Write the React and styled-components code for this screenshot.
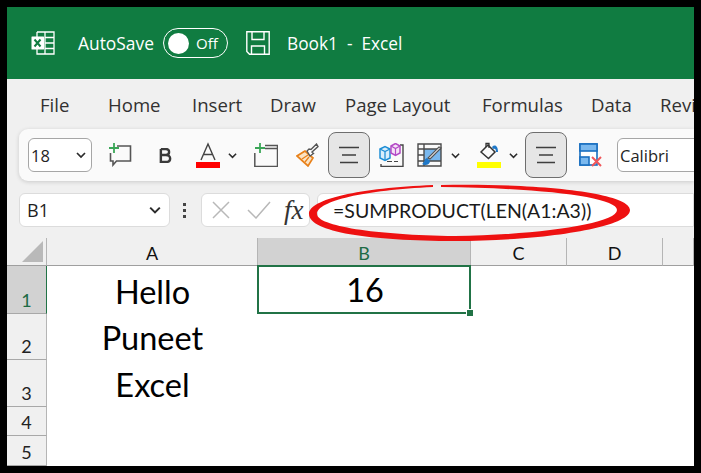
import React from "react";
import styled, { createGlobalStyle } from "styled-components";

const Global = createGlobalStyle`
  html, body { margin: 0; padding: 0; background: #000; }
  body { width: 701px; height: 473px; overflow: hidden; }
`;

const UI = `"Open Sans", "Noto Sans", sans-serif`;
const CELL = `Lato, "Open Sans", sans-serif`;

const Frame = styled.div`
  position: relative;
  box-sizing: border-box;
  width: 701px;
  height: 473px;
  padding: 7px 7px 7px 7px;
  background: #000;
  overflow: hidden;
`;
const Window = styled.div`
  display: flex;
  flex-direction: column;
  height: 459px;
  background: #f0f0f0;
  overflow: hidden;
`;
const TitleBar = styled.header`
  display: flex;
  align-items: center;
  flex: none;
  height: 72px;
  padding-left: 24px;
  background: #107c41;
  color: #fff;
  font: 400 17.4px ${UI};
  white-space: nowrap;
`;
const AutoSaveLabel = styled.span`
  margin-left: 23px;
`;
const Toggle = styled.div`
  display: flex;
  align-items: center;
  box-sizing: border-box;
  width: 65px;
  height: 30px;
  margin-left: 9px;
  padding-left: 4px;
  border: 1px solid #fff;
  border-radius: 15px;
  font-size: 15px;
`;
const Knob = styled.span`
  width: 21px;
  height: 21px;
  border-radius: 50%;
  background: #fff;
`;
const ToggleText = styled.span`
  margin-left: 7px;
`;
const SaveSlot = styled.span`
  display: block;
  margin-left: 18px;
`;
const DocTitle = styled.span`
  margin-left: 17px;
  font-size: 17.3px;
  white-space: pre;
`;

const Menu = styled.nav`
  display: flex;
  align-items: center;
  flex: none;
  height: 50px;
  color: #323130;
  font: 400 18.6px ${UI};
  white-space: nowrap;
  overflow: hidden;
`;
const MenuItem = styled.span`
  flex: none;
  width: ${(p) => p.$w}px;
  margin-left: ${(p) => p.$ml || 0}px;
`;

const Toolbar = styled.div`
  display: flex;
  align-items: center;
  flex: none;
  height: 52px;
  margin-left: 12px;
  padding-left: 9px;
  background: #fafafa;
  border-radius: 9px 0 0 9px;
  box-shadow: 0 1px 4px rgba(0, 0, 0, 0.16);
  overflow: hidden;
`;
const Select = styled.div`
  display: flex;
  align-items: center;
  justify-content: space-between;
  box-sizing: border-box;
  flex: none;
  width: ${(p) => p.$w}px;
  height: 34px;
  margin-left: ${(p) => p.$ml || 0}px;
  padding: 0 5px 0 2px;
  background: #fff;
  border: 1px solid #a6a6a6;
  border-radius: 6px;
  color: #242424;
  font: 400 16.5px ${UI};
`;
const Tool = styled.div`
  display: flex;
  align-items: center;
  justify-content: center;
  flex: none;
  width: ${(p) => p.$w}px;
  margin-left: ${(p) => p.$ml || 0}px;
`;
const ActiveTool = styled.div`
  display: flex;
  align-items: center;
  justify-content: center;
  box-sizing: border-box;
  flex: none;
  width: 42px;
  height: 46px;
  margin-left: ${(p) => p.$ml || 0}px;
  background: #e6e6e6;
  border: 1px solid #6e6e6e;
  border-radius: 8px;
`;

const FormulaRow = styled.div`
  display: flex;
  align-items: center;
  flex: none;
  height: 34px;
  margin-top: 12px;
  margin-left: 12px;
`;
const FieldBox = styled.div`
  display: flex;
  align-items: center;
  box-sizing: border-box;
  flex: ${(p) => (p.$grow ? "1" : "none")};
  width: ${(p) => (p.$w ? `${p.$w}px` : "auto")};
  height: 34px;
  margin-left: ${(p) => p.$ml || 0}px;
  background: #fff;
  border: 1px solid #dcdcdc;
  border-radius: ${(p) => (p.$grow ? "6px 0 0 6px" : "6px")};
  color: #1f1f1f;
  font: 400 18px ${UI};
`;
const NameText = styled.span`
  flex: 1;
  padding-left: 7px;
`;
const NameChevron = styled.span`
  display: flex;
  margin-right: 8px;
`;
const Dots = styled.div`
  display: flex;
  flex-direction: column;
  gap: 3px;
  margin-left: 13px;
`;
const Dot = styled.span`
  width: 3px;
  height: 3px;
  background: #444;
`;
const FxText = styled.span`
  margin-left: 13px;
  color: #333;
  font: italic 400 27px "Liberation Serif", serif;
`;
const FormulaText = styled.span`
  padding-left: 15px;
  color: #1a1a1a;
  font: 400 19.5px ${CELL};
  white-space: nowrap;
`;

const Sheet = styled.div`
  display: grid;
  flex: none;
  grid-template-columns: 40px 211px 213px 96px 96px 31px;
  grid-template-rows: 28px 48px 46px 47px 29px 30px;
  margin-top: 11px;
  background: #fff;
  font-family: ${CELL};
`;
const Corner = styled.div`
  position: relative;
  background: #f0f0f0;
  border-right: 1px solid #b5b5b5;
  border-bottom: 1px solid #9f9f9f;
  box-sizing: border-box;
`;
const Triangle = styled.span`
  position: absolute;
  right: 3px;
  bottom: 3px;
  width: 21px;
  height: 21px;
  background: #b9b9b9;
  clip-path: polygon(100% 0, 100% 100%, 0 100%);
`;
const ColHead = styled.div`
  display: flex;
  align-items: center;
  justify-content: center;
  box-sizing: border-box;
  padding-top: 2px;
  background: ${(p) => (p.$on ? "#d2d2d2" : "#f0f0f0")};
  border-right: 1px solid #b5b5b5;
  border-bottom: 1px solid #9f9f9f;
  color: ${(p) => (p.$on ? "#1e6b45" : "#111")};
  font-size: 18px;
`;
const RowHead = styled.div`
  display: flex;
  align-items: flex-end;
  justify-content: center;
  box-sizing: border-box;
  padding-bottom: 2px;
  background: ${(p) => (p.$on ? "#d2d2d2" : "#f0f0f0")};
  border-right: 1px solid ${(p) => (p.$on ? "#217346" : "#b5b5b5")};
  border-bottom: 1px solid #a8a8a8;
  color: ${(p) => (p.$on ? "#1e6b45" : "#222")};
  font-size: 18px;
  line-height: 22px;
`;
const Cell = styled.div`
  display: flex;
  align-items: flex-end;
  justify-content: center;
  box-sizing: border-box;
  color: #000;
  font-size: 32.5px;
  line-height: 44px;
`;
const Selected = styled(Cell)`
  position: relative;
  z-index: 1;
  margin: -1px 0 0 -1px;
  padding-left: 2px;
  border: 2px solid #217346;
  border-bottom-width: 2px;
`;
const Handle = styled.span`
  position: absolute;
  right: -4px;
  bottom: -4px;
  width: 6px;
  height: 6px;
  background: #217346;
  outline: 1px solid #fff;
`;
const Oval = styled.svg`
  position: absolute;
  left: 0;
  top: 0;
  z-index: 3;
  pointer-events: none;
`;

const Chevron = ({ size = 10 }) => (
  <svg width={size} height={size} viewBox="0 0 10 10" fill="none">
    <path d="M1 3l4 4 4-4" stroke="#2b2b2b" strokeWidth="1.7" />
  </svg>
);
const Lines = () => (
  <svg width="24" height="24" viewBox="0 0 24 24" stroke="#3f3f3f" strokeWidth="1.6">
    <path d="M2 4.5h20M5 12h14M3 19.5h18" />
  </svg>
);

const ExcelLogo = () => (
  <svg width="24" height="24" viewBox="0 0 24 24">
    <path d="M6 1h17v22H6V18" fill="none" stroke="#fff" strokeWidth="1.3" />
    <path d="M14 1v22M14 6.5h9M14 12h9M14 17.5h9M6 1v5" stroke="#fff" strokeWidth="1.3" />
    <rect x="0.5" y="5.5" width="12.5" height="13" rx="0.5" fill="#fff" />
    <path d="M3.5 8.5l6 7M9.5 8.5l-6 7" stroke="#107c41" strokeWidth="2" />
  </svg>
);
const FloppyIcon = () => (
  <svg width="24" height="24" viewBox="0 0 24 24" fill="none" stroke="#fff" strokeWidth="1.4" style={{ display: "block" }}>
    <path d="M.8.8h22.4v22.4H3.5L.8 20.5z" />
    <path d="M6 1v7.5h12V1M5.5 23v-8h13v8" />
  </svg>
);
const CommentIcon = () => (
  <svg width="24" height="24" viewBox="0 0 24 24" fill="none">
    <path d="M9 3h13.5v15H8.5L5 22v-4H2.5V10" stroke="#555" strokeWidth="1.6" />
    <path d="M6 0v10M1 5h10" stroke="#3aa657" strokeWidth="1.8" />
  </svg>
);
const ColorA = () => (
  <svg width="24" height="26" viewBox="0 0 24 26">
    <path d="M5 18L12 2l7 16M7.5 12.5h9" fill="none" stroke="#444" strokeWidth="1.4" />
    <rect y="20" width="24" height="6" fill="#f00" />
  </svg>
);
const NewSheetIcon = () => (
  <svg width="24" height="24" viewBox="0 0 24 24" fill="none">
    <path d="M11 2.5h12.5v21H.8V10" stroke="#555" strokeWidth="1.5" />
    <path d="M11 5.5h12" stroke="#555" strokeWidth="1.5" />
    <path d="M6 0v10M1 5h10" stroke="#3aa657" strokeWidth="1.8" />
  </svg>
);
const BrushIcon = () => (
  <svg width="25" height="24" viewBox="0 0 25 24" fill="none">
    <path d="M9 8L1 13l11 10 5-8z" fill="#fbe3c4" stroke="#e8811a" strokeWidth="1.7" />
    <path d="M6 16l6-4M9 19l4-5" stroke="#e8811a" strokeWidth="1.3" />
    <path d="M11 8l3 5 3.5-2.5L16 9l6-5.5L20.5 1 15 6.5 13 6z" fill="#fff" stroke="#555" strokeWidth="1.4" />
  </svg>
);
const CubesIcon = () => (
  <svg width="25" height="24" viewBox="0 0 25 24" fill="none">
    <path d="M2 21v2.5h22V2h-3" stroke="#444" strokeWidth="1.4" />
    <path d="M8 18.5h5M15 18.5h4" stroke="#444" strokeWidth="1.2" />
    <path d="M1 6l5-2.5L11 6v9l-5 2.5L1 15z" fill="#d9eefb" stroke="#1f8fd6" strokeWidth="1.5" />
    <path d="M1 6l5 2.5L11 6M6 8.5v9" stroke="#1f8fd6" strokeWidth="1.3" />
    <path d="M12 3l4.5-2.5L21 3v7l-4.5 2.5L12 10z" fill="#f5e3f7" stroke="#b44ac6" strokeWidth="1.5" />
    <path d="M12 3l4.5 2.5L21 3M16.5 5.5v7" stroke="#b44ac6" strokeWidth="1.2" />
  </svg>
);
const TableBrushIcon = () => (
  <svg width="25" height="24" viewBox="0 0 25 24" fill="none">
    <rect x="7" y="6" width="17" height="12" fill="#7ab8ee" />
    <path d="M1 1h23v22H1zM1 6h23M7 1v22M1 12h6M1 18h23" stroke="#4a4a4a" strokeWidth="1.4" />
    <path d="M24 5L13 16l-2-1 11-11z" fill="#fff" stroke="#555" strokeWidth="1.2" />
    <path d="M10 15c-3 1-2 4-5 6 3 2 8 1 8-3z" fill="#1f78c8" />
  </svg>
);
const BucketIcon = () => (
  <svg width="24" height="26" viewBox="0 0 24 26">
    <path d="M4 10L11 3l7 7-6.5 6.5z" fill="none" stroke="#333" strokeWidth="1.5" />
    <path d="M9 5V1.5h3V6" fill="none" stroke="#333" strokeWidth="1.3" />
    <path d="M15 5c3-3 6-1 6 5h-2c0-3-1-4-3-3z" fill="#1f78c8" />
    <rect y="20" width="24" height="6" fill="#ff0" />
  </svg>
);
const DeleteRowsIcon = () => (
  <svg width="24" height="24" viewBox="0 0 24 24" fill="none">
    <rect x="1" y="1" width="17" height="21" fill="#fff" stroke="#1a6fc0" strokeWidth="1.6" />
    <rect x="1" y="1" width="17" height="7" fill="#7ab8ee" stroke="#1a6fc0" strokeWidth="1.6" />
    <rect x="1" y="14" width="9" height="8" fill="#7ab8ee" stroke="#1a6fc0" strokeWidth="1.6" />
    <path d="M13 14l9 9M22 14l-9 9" stroke="#f0565a" strokeWidth="2" />
  </svg>
);
const CrossIcon = () => (
  <svg width="18" height="18" viewBox="0 0 18 18" stroke="#b8b8b8" strokeWidth="1.5">
    <path d="M1 1l16 16M17 1L1 17" />
  </svg>
);
const CheckIcon = () => (
  <svg width="24" height="18" viewBox="0 0 24 18" fill="none" stroke="#b8b8b8" strokeWidth="1.5">
    <path d="M1 9l8 8L23 1" />
  </svg>
);

const menu = [
  ["File", 33, 68],
  ["Home", 0, 84],
  ["Insert", 0, 78],
  ["Draw", 0, 75],
  ["Page Layout", 0, 137],
  ["Formulas", 0, 109],
  ["Data", 0, 69],
  ["Review", 0, 80],
];

const rows = [
  { n: 1, on: true, a: "Hello", b: "16" },
  { n: 2, a: "Puneet" },
  { n: 3, a: "Excel" },
  { n: 4 },
  { n: 5 },
];

export default function App() {
  return (
    <Frame>
      <Global />
      <Window>
        <TitleBar>
          <ExcelLogo />
          <AutoSaveLabel>AutoSave</AutoSaveLabel>
          <Toggle>
            <Knob />
            <ToggleText>Off</ToggleText>
          </Toggle>
          <SaveSlot>
            <FloppyIcon />
          </SaveSlot>
          <DocTitle>Book1  -  Excel</DocTitle>
        </TitleBar>
        <Menu>
          {menu.map(([t, ml, w]) => (
            <MenuItem key={t} $ml={ml} $w={w}>
              {t}
            </MenuItem>
          ))}
        </Menu>
        <Toolbar>
          <Select $w={64}>
            18
            <Chevron />
          </Select>
          <Tool $w={24} $ml={16}><CommentIcon /></Tool>
          <Tool $w={14} $ml={26}>
            <svg width="13" height="15" viewBox="0 0 14 16" fill="none" stroke="#3a3a3a" strokeWidth="2.6">
              <path d="M2 1v14h5.5c6 0 6-7.5 0-7.5H2M7.5 7.5c4.5 0 4.5-6.5 0-6.5H2" />
            </svg>
          </Tool>
          <Tool $w={24} $ml={24}><ColorA /></Tool>
          <Tool $w={10} $ml={7}><Chevron size={9} /></Tool>
          <Tool $w={25} $ml={16}><NewSheetIcon /></Tool>
          <Tool $w={25} $ml={18}><BrushIcon /></Tool>
          <ActiveTool $ml={7}><Lines /></ActiveTool>
          <Tool $w={25} $ml={9}><CubesIcon /></Tool>
          <Tool $w={25} $ml={13}><TableBrushIcon /></Tool>
          <Tool $w={10} $ml={8}><Chevron size={9} /></Tool>
          <Tool $w={24} $ml={17}><BucketIcon /></Tool>
          <Tool $w={10} $ml={7}><Chevron size={9} /></Tool>
          <ActiveTool $ml={7}><Lines /></ActiveTool>
          <Tool $w={24} $ml={12}><DeleteRowsIcon /></Tool>
          <Select $w={110} $ml={14}>Calibri</Select>
        </Toolbar>
        <FormulaRow>
          <FieldBox $w={151}>
            <NameText>B1</NameText>
            <NameChevron><Chevron size={12} /></NameChevron>
          </FieldBox>
          <Dots>
            <Dot /><Dot /><Dot />
          </Dots>
          <FieldBox $w={109} $ml={15}>
            <Tool $w={18} $ml={10}><CrossIcon /></Tool>
            <Tool $w={24} $ml={17}><CheckIcon /></Tool>
            <FxText>fx</FxText>
          </FieldBox>
          <FieldBox $grow $ml={7}>
            <FormulaText>=SUMPRODUCT(LEN(A1:A3))</FormulaText>
          </FieldBox>
        </FormulaRow>
        <Sheet>
          <Corner><Triangle /></Corner>
          <ColHead>A</ColHead>
          <ColHead $on>B</ColHead>
          <ColHead>C</ColHead>
          <ColHead>D</ColHead>
          <ColHead />
          {rows.map((r) => (
            <React.Fragment key={r.n}>
              <RowHead $on={r.on}>{r.n}</RowHead>
              <Cell>{r.a}</Cell>
              {r.on ? (
                <Selected>
                  {r.b}
                  <Handle />
                </Selected>
              ) : (
                <Cell />
              )}
              <Cell />
              <Cell />
              <Cell />
            </React.Fragment>
          ))}
        </Sheet>
      </Window>
      <Oval width="701" height="473" viewBox="0 0 701 473">
        <path
          fill="#ee1111"
          d="M441 185C540 183 630 193 630 210C630 228 540 241 455 241C370 241 309 232 309 214C309 199 360 188 433 185L433 187C365 190 317 201 317 214C317 226 375 235 455 236C535 235 617 224 617 210C617 197 540 188 441 187Z"
        />
      </Oval>
    </Frame>
  );
}
